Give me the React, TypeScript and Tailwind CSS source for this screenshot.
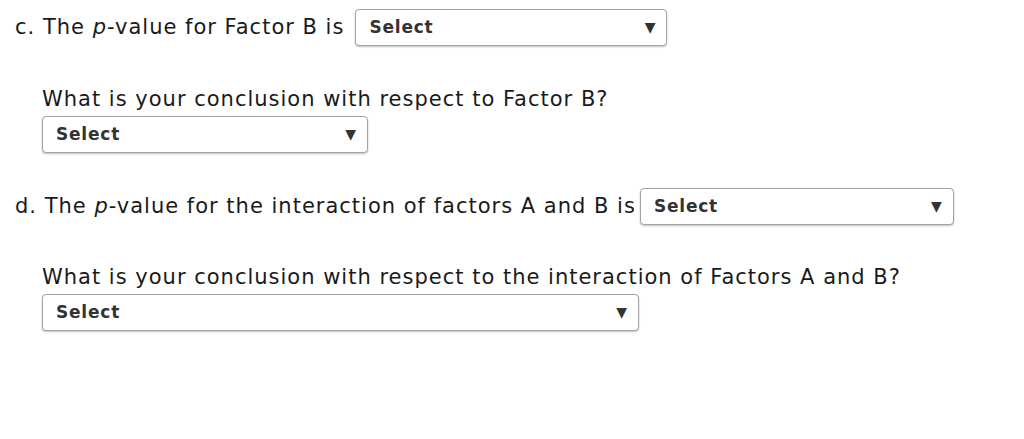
const font = { fontFamily: '"DejaVu Sans", Verdana, sans-serif' };

function SelectBox({ width }: { width: string }) {
  return (
    <div
      className={`flex h-[37px] ${width} items-center justify-between rounded-[4px] border border-[#a3a3a3] bg-white pl-[13px] pr-[11px] shadow-[0_1px_2px_rgba(0,0,0,0.25)]`}
    >
      <span className="text-[17px] font-bold tracking-[0.8px] text-[#333333]">Select</span>
      <span className="text-[14px] text-[#333333]">▼</span>
    </div>
  );
}

export default function App() {
  return (
    <div
      className="h-[439px] w-[1024px] bg-white text-[21px] tracking-[1px] text-[#1a1a1a]"
      style={font}
    >
      <div className="flex items-center pl-[15px] pt-[9px]">
        <span>
          c. The <i>p</i>-value for Factor B is
        </span>
        <div className="ml-[11px] tracking-normal">
          <SelectBox width="w-[312px]" />
        </div>
      </div>

      <div className="pl-[42px] pt-[40px]">
        <div className="leading-[26px]">What is your conclusion with respect to Factor B?</div>
        <div className="mt-[4px] tracking-normal">
          <SelectBox width="w-[326px]" />
        </div>
      </div>

      <div className="flex items-center pl-[15px] pt-[35px]">
        <span>
          d. The <i>p</i>-value for the interaction of factors A and B is
        </span>
        <div className="ml-[4px] tracking-normal">
          <SelectBox width="w-[314px]" />
        </div>
      </div>

      <div className="pl-[42px] pt-[39px]">
        <div className="leading-[26px]">
          What is your conclusion with respect to the interaction of Factors A and B?
        </div>
        <div className="mt-[4px] tracking-normal">
          <SelectBox width="w-[597px]" />
        </div>
      </div>
    </div>
  );
}
